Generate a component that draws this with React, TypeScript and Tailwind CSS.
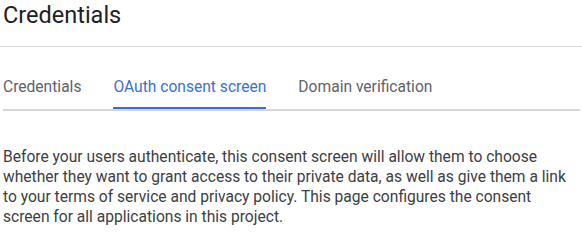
export default function App() {
  const tabs = ['Credentials', 'OAuth consent screen', 'Domain verification']
  const active = 1

  return (
    <div className="w-[582px] h-[238px] bg-white font-['Roboto',sans-serif] overflow-hidden">
      <div className="h-[47px] border-b border-[#dadada] pl-[3px]">
        <h1 className="text-[23.5px] leading-[30px] text-[#202124]">Credentials</h1>
      </div>

      <div className="mt-[28px] mr-[2px] ml-[3px] flex gap-[32px] border-b-2 border-[#d6d6d6]">
        {tabs.map((t, i) => (
          <div
            key={t}
            className={
              i === active
                ? 'relative pb-[10px] text-[15.6px] leading-[24px] text-[#3b6fd6]'
                : 'pb-[10px] text-[15.6px] leading-[24px] text-[#5f6368]'
            }
          >
            {t}
            {i === active && <div className="absolute left-0 right-0 bottom-0 h-[2px] bg-[#3b6fd6]" />}
          </div>
        ))}
      </div>

      <p className="mt-[36px] pl-[3px] pr-[12px] text-[15.6px] leading-[20px] text-[#3c4043]">
        Before your users authenticate, this consent screen will allow them to choose whether they want to grant access to their private data, as well as give them a link to your terms of service and privacy policy. This page configures the consent screen for all applications in this project.
      </p>
    </div>
  )
}
